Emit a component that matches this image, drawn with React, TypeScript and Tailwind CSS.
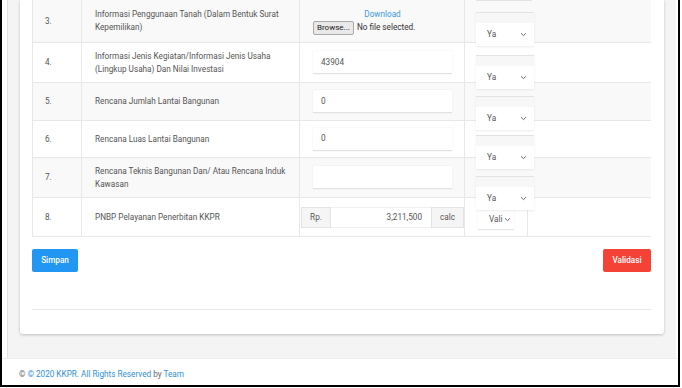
import React from "react";

const Chevron = ({ className = "" }: { className?: string }) => (
  <svg viewBox="0 0 10 6" className={className} fill="none" stroke="currentColor" strokeWidth="1.4">
    <path d="M1.5 1.2 5 4.6 8.5 1.2" />
  </svg>
);

type Row = {
  no: string;
  label: string;
  value?: string;
  striped: boolean;
  h: string;
  selTop: string;
  kind: "file" | "input";
};

const rows: Row[] = [
  { no: "3.", label: "Informasi Penggunaan Tanah (Dalam Bentuk Surat Kepemilikan)", striped: true, h: "h-[43px]", selTop: "mt-[11px]", kind: "file" },
  { no: "4.", label: "Informasi Jenis Kegiatan/Informasi Jenis Usaha (Lingkup Usaha) Dan Nilai Investasi", value: "43904", striped: false, h: "h-[40px]", selTop: "mt-[12px]", kind: "input" },
  { no: "5.", label: "Rencana Jumlah Lantai Bangunan", value: "0", striped: true, h: "h-[38px]", selTop: "mt-[13px]", kind: "input" },
  { no: "6.", label: "Rencana Luas Lantai Bangunan", value: "0", striped: false, h: "h-[37px]", selTop: "mt-[14px]", kind: "input" },
  { no: "7.", label: "Rencana Teknis Bangunan Dan/ Atau Rencana Induk Kawasan", value: "", striped: true, h: "h-[40px]", selTop: "mt-[18px]", kind: "input" },
];

const SelectYa = () => (
  <div className="relative z-10 ml-[11px] w-[58px] border-t border-[#e3e3e3] bg-[#f7f7f7] pt-[10px] shadow-[0_1px_2px_rgba(0,0,0,0.08)]">
    <div className="flex h-[23px] items-center justify-between bg-white pl-[11px] pr-[7px] text-[8.2px] text-[#555]">
      <span>Ya</span>
      <Chevron className="w-[7px] h-[5px] text-[#666]" />
    </div>
  </div>
);

const App = () => {
  return (
    <div className="w-[682px] h-[388px] bg-white overflow-hidden font-['Roboto',sans-serif]">
      <div className="w-[680px] h-[387px] border-l-2 border-r-2 border-b-2 border-black flex flex-col">
        <div className="flex h-[358px] shrink-0">
          <div className="w-[5px] bg-white" />
          <div className="flex-1 bg-[#f4f4f4] border-l border-[#e2e2e2] px-[12px] pb-[24px] flex">
            <div className="flex-1 bg-white rounded-b-[3px] shadow-[0_1px_3px_rgba(0,0,0,0.22)] pl-[12px] pr-[13px] flex flex-col">
              {/* table */}
              <div className="grid grid-cols-[49px_218px_165px_63px_123px] border-l border-[#e8e8e8] text-[8.2px] text-[#555]">
                {rows.map((r) => {
                  const bg = r.striped ? "bg-[#f9f9f9]" : "bg-white";
                  return (
                    <React.Fragment key={r.no}>
                      <div className={`${r.h} ${bg} border-r border-b border-[#e8e8e8] flex items-center pl-[12px]`}>{r.no}</div>
                      <div className={`${r.h} ${bg} border-r border-b border-[#e8e8e8] flex items-center pl-[13px] pr-[8px] leading-[13px]`}>
                        {r.label}
                      </div>
                      <div className={`${r.h} ${bg} border-r border-b border-[#e8e8e8] flex flex-col justify-center pl-[13px] pr-[12px]`}>
                        {r.kind === "file" ? (
                          <div className="flex flex-col">
                            <span className="text-center text-[8.2px] leading-[12px] text-[#3b9ae1]">Download</span>
                            <div className="flex items-center gap-[3px] mt-[1px]">
                              <span className="h-[14px] px-[3px] flex items-center border border-[#a9a9a9] rounded-[2px] bg-[#e9e9e9] text-[8px] text-[#222]">
                                Browse...
                              </span>
                              <span className="text-[8.2px] text-[#333]">No file selected.</span>
                            </div>
                          </div>
                        ) : (
                          <div className="h-[23px] bg-white border-b border-[#e2e2e2] shadow-[0_0_1px_rgba(0,0,0,0.12)] flex items-center pl-[8px]">
                            {r.value}
                          </div>
                        )}
                      </div>
                      <div className={`${r.h} ${bg} col-span-2 border-b border-[#e8e8e8] flex flex-col`}>
                        {r.no === "3." && <div className="ml-[11px] w-[56px] h-[3px] bg-white border-b border-[#e3e3e3]" />}
                        <div className={r.selTop}>
                          <SelectYa />
                        </div>
                      </div>
                    </React.Fragment>
                  );
                })}
                {/* row 8 */}
                <div className="h-[39px] border-r border-b border-[#e8e8e8] flex items-center pl-[12px]">8.</div>
                <div className="h-[39px] border-r border-b border-[#e8e8e8] flex items-center pl-[13px]">PNBP Pelayanan Penerbitan KKPR</div>
                <div className="h-[39px] border-r border-b border-[#e8e8e8] flex items-center pl-[1px]">
                  <div className="flex h-[21px] w-full">
                    <span className="w-[30px] bg-[#f5f5f5] border border-[#e3e3e3] flex items-center justify-center">Rp.</span>
                    <span className="flex-1 bg-white flex items-center justify-end pr-[9px] border-y border-[#f0f0f0]">3,211,500</span>
                    <span className="w-[33px] bg-[#f5f5f5] border border-[#e3e3e3] flex items-center justify-center">calc</span>
                  </div>
                </div>
                <div className="h-[39px] border-r border-b border-[#e8e8e8] pl-[13px] pt-[11px]">
                  <div className="w-[36px] h-[20px] bg-white shadow-[0_1px_1px_rgba(0,0,0,0.1)] flex items-center pl-[11px] gap-[2px]">
                    <span>Vali</span>
                    <Chevron className="w-[7px] h-[5px] text-[#666]" />
                  </div>
                </div>
                <div className="h-[39px] border-b border-[#e8e8e8]" />
              </div>

              <div className="mt-[12px] flex justify-between">
                <button className="h-[23px] w-[46px] rounded-[2px] bg-[#2196f3] text-white text-[8.2px] font-medium">Simpan</button>
                <button className="h-[23px] w-[48px] rounded-[2px] bg-[#f44336] text-white text-[8.2px] font-medium">Validasi</button>
              </div>

              <div className="mt-[37px] border-t border-[#e9e9e9]" />
            </div>
          </div>
          <div className="w-[2px] bg-white" />
        </div>
        <div className="flex-1 bg-white border-t border-[#eeeeee] pl-[17px] pt-[9px] text-[8.2px] text-[#666]">
          © <span className="text-[#2f8fd8]">© 2020 KKPR. All Rights Reserved</span> by{" "}
          <span className="text-[#2f8fd8]">Team</span>
        </div>
      </div>
    </div>
  );
};

export default App;
